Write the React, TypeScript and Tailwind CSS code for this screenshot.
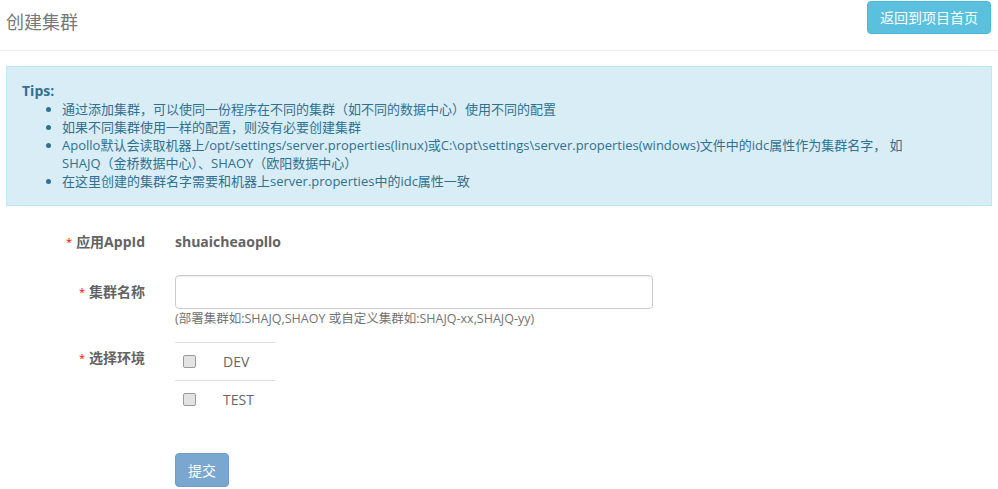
import React from 'react';

const font = { fontFamily: '"Open Sans", "Noto Sans CJK SC", sans-serif' };

const tips = [
  '通过添加集群，可以使同一份程序在不同的集群（如不同的数据中心）使用不同的配置',
  '如果不同集群使用一样的配置，则没有必要创建集群',
];

function Label({ text, className = '' }: { text: string; className?: string }) {
  return (
    <div className={`w-[145px] shrink-0 text-right font-bold text-[#636363] leading-[20px] ${className}`}>
      <span className="text-[#f00] text-[11px] font-normal align-top mr-[4px]">*</span>
      {text}
    </div>
  );
}

export default function App() {
  return (
    <div className="w-full min-h-screen bg-white text-[14px] text-[#333]" style={font}>
      {/* header */}
      <div className="h-[51px] flex justify-between items-start border-b border-[#eee] pl-[6px] pr-[7px]">
        <h1 className="mt-[10px] text-[18px] leading-[24px] text-[#777] font-normal">创建集群</h1>
        <button className="mt-[1px] h-[33px] px-[12px] rounded-[4px] bg-[#5bc0de] border border-[#46b8da] text-white text-[14px]">
          返回到项目首页
        </button>
      </div>

      {/* tips */}
      <div className="mx-[6px] mt-[15px] border border-[#bce8f1] bg-[#d9edf7] text-[#31708f] pt-[15px] pb-[15px] pl-[15px] leading-[18px] text-[13px]">
        <div className="font-bold text-[14px]">Tips:</div>
        <ul className="list-disc pl-[40px]">
          {tips.map(t => (
            <li key={t}>{t}</li>
          ))}
          <li>
            <span className="whitespace-nowrap">
              Apollo默认会读取机器上/opt/settings/server.properties(linux)或C:\opt\settings\server.properties(windows)文件中的idc属性作为集群名字， 如
            </span>
            <br />
            SHAJQ（金桥数据中心）、SHAOY（欧阳数据中心）
          </li>
          <li>在这里创建的集群名字需要和机器上server.properties中的idc属性一致</li>
        </ul>
      </div>

      {/* form */}
      <div className="pt-[26px]">
        <div className="flex">
          <Label text="应用AppId" />
          <div className="ml-[30px] font-bold text-[#636363] leading-[20px]">shuaicheaopllo</div>
        </div>

        <div className="flex mt-[23px]">
          <Label text="集群名称" className="pt-[7px]" />
          <div className="ml-[30px]">
            <input
              type="text"
              className="block w-[478px] h-[34px] border border-[#ccc] rounded-[4px] px-[12px] shadow-[inset_0_1px_1px_rgba(0,0,0,0.075)] outline-none"
            />
            <div className="mt-[1px] text-[12.5px] leading-[17px] text-[#737373]">
              (部署集群如:SHAJQ,SHAOY 或自定义集群如:SHAJQ-xx,SHAJQ-yy)
            </div>
          </div>
        </div>

        <div className="flex mt-[15px]">
          <Label text="选择环境" className="pt-[6px]" />
          <div className="ml-[30px] w-[100px]">
            {['DEV', 'TEST'].map(env => (
              <div key={env} className="flex items-center h-[38px] border-t border-[#ddd] text-[#666]">
                <span className="ml-[8px] w-[13px] h-[13px] rounded-[2px] border border-[#9a9a9a] bg-[#e3e3e3]" />
                <span className="ml-[27px]">{env}</span>
              </div>
            ))}
          </div>
        </div>

        <div className="mt-[35px] ml-[175px]">
          <button className="w-[54px] h-[34px] rounded-[4px] bg-[#7aa7d0] border border-[#6f9cc6] text-white text-[14px]">
            提交
          </button>
        </div>
      </div>
    </div>
  );
}
